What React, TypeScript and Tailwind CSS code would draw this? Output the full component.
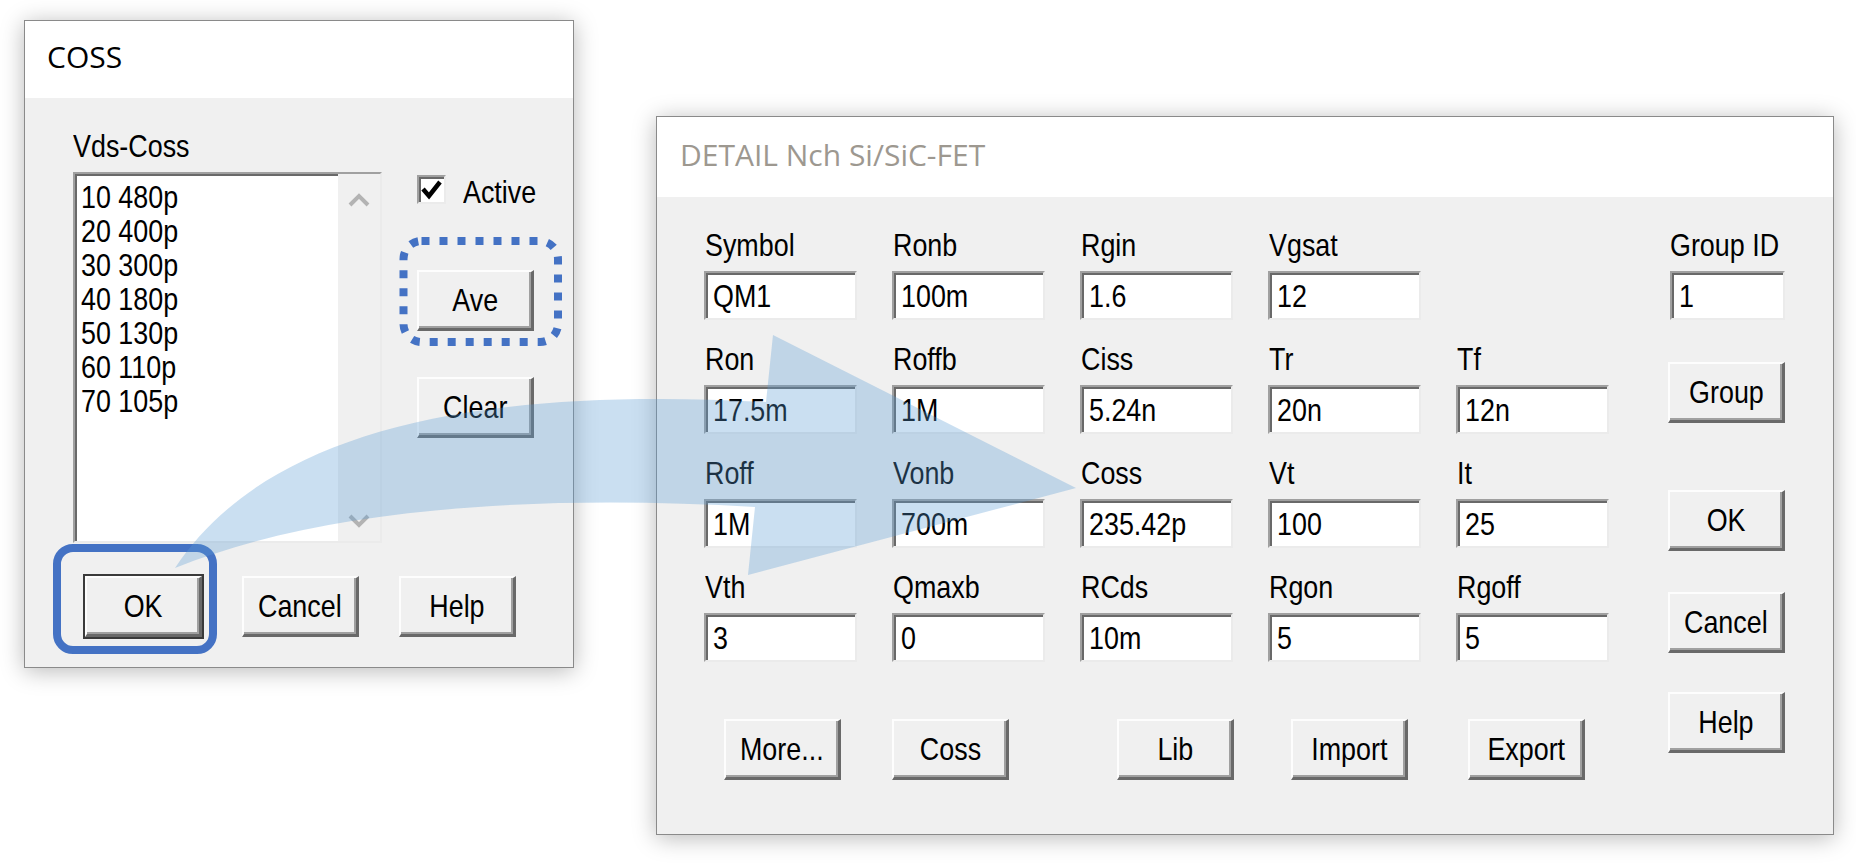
import React from 'react';

const ui = "font-['Liberation_Sans',sans-serif] text-[32px] leading-[34px] text-black";

// Dialog font is a narrow sans; squeeze Liberation Sans to Arial Narrow proportions
const T = ({ children, center = false }: { children: React.ReactNode; center?: boolean }) => (
  <span className={`inline-block whitespace-nowrap scale-x-[0.84] ${center ? 'origin-center' : 'origin-left'}`}>{children}</span>
);

const Btn = ({ label, def = false, className = '' }: { label: string; def?: boolean; className?: string }) => (
  <div
    className={`flex items-center justify-center w-[117px] h-[61px] shrink-0 bg-[#f0f0f0] border-t-2 border-l-2 border-t-[#fdfdfd] border-l-[#fdfdfd] border-r-[3px] border-b-[3px] border-r-[#696969] border-b-[#696969] shadow-[inset_-2px_-2px_0_#a0a0a0] ${def ? 'outline-2 outline-[#3a3a3a]' : ''} ${className}`}
  >
    <T center>{label}</T>
  </div>
);

const sunken = 'bg-white border-t-2 border-l-2 border-t-[#a0a0a0] border-l-[#a0a0a0] border-r-2 border-b-2 border-r-[#ebebeb] border-b-[#ebebeb] shadow-[inset_2px_2px_0_#696969]';

const Field = ({ value, className = 'w-[153px]' }: { value: string; className?: string }) => (
  <div className={`flex items-center h-[49px] pl-[7px] ${sunken} ${className}`}>
    <T>{value}</T>
  </div>
);

const Chevron = ({ down = false }: { down?: boolean }) => (
  <svg width="22" height="14" viewBox="0 0 22 14">
    <polyline
      points={down ? '2,2 11,11 20,2' : '2,12 11,3 20,12'}
      fill="none"
      stroke="#b3b3b3"
      strokeWidth="4"
    />
  </svg>
);

const CossDialog = () => {
  const items = ['10 480p', '20 400p', '30 300p', '40 180p', '50 130p', '60 110p', '70 105p'];
  return (
    <div className="mt-[20px] w-[550px] h-[648px] shrink-0 flex flex-col bg-white border border-[#8a8a8a] shadow-[0_3px_22px_rgba(0,0,0,0.28)]">
      <div className="h-[77px] pl-[22px] pt-[21px] font-['Open_Sans',sans-serif] text-[30px] leading-[30px] text-black">COSS</div>
      <div className={`flex-1 bg-[#f0f0f0] pl-[48px] pt-[31px] ${ui}`}>
        <div className="flex">
          <div className="flex flex-col">
            <div>
              <T>Vds-Coss</T>
            </div>
            <div className={`mt-[9px] flex w-[309px] h-[371px] ${sunken}`}>
              <div className="w-[263px] pl-[6px] pt-[6px]">
                {items.map((it) => (
                  <div key={it}>
                    <T>{it}</T>
                  </div>
                ))}
              </div>
              <div className="w-[42px] bg-[#f0f0f0] flex flex-col items-center justify-between pt-[19px] pb-[13px]">
                <Chevron />
                <Chevron down />
              </div>
            </div>
          </div>
          <div className="ml-[35px] pt-[46px] flex flex-col">
            <div className="flex items-start">
              <div className={`w-[29px] h-[29px] ${sunken}`}>
                <svg width="25" height="25" viewBox="0 0 25 25">
                  <polyline points="4,12 10,19 21,5" fill="none" stroke="#000" strokeWidth="4.5" />
                </svg>
              </div>
              <span className="ml-[17px]">
                <T>Active</T>
              </span>
            </div>
            <Btn label="Ave" className="mt-[61px]" />
            <Btn label="Clear" className="mt-[46px]" />
          </div>
        </div>
        <div className="flex gap-[40px] ml-[12px] mt-[33px]">
          <Btn label="OK" def />
          <Btn label="Cancel" />
          <Btn label="Help" />
        </div>
      </div>
    </div>
  );
};

const rows: ([string, string] | null)[][] = [
  [['Symbol', 'QM1'], ['Ronb', '100m'], ['Rgin', '1.6'], ['Vgsat', '12'], null],
  [['Ron', '17.5m'], ['Roffb', '1M'], ['Ciss', '5.24n'], ['Tr', '20n'], ['Tf', '12n']],
  [['Roff', '1M'], ['Vonb', '700m'], ['Coss', '235.42p'], ['Vt', '100'], ['It', '25']],
  [['Vth', '3'], ['Qmaxb', '0'], ['RCds', '10m'], ['Rgon', '5'], ['Rgoff', '5']],
];

const DetailDialog = () => (
  <div className="ml-[82px] mt-[116px] w-[1178px] h-[719px] shrink-0 flex flex-col bg-white border border-[#8a8a8a] shadow-[0_3px_22px_rgba(0,0,0,0.28)]">
    <div className="h-[80px] pl-[23px] pt-[23px] font-['Open_Sans',sans-serif] text-[30px] leading-[30px] text-[#9d9890]">
      DETAIL Nch Si/SiC-FET
    </div>
    <div className={`flex-1 bg-[#f0f0f0] flex pl-[47px] pt-[31px] ${ui}`}>
      <div className="flex flex-col">
        <div className="grid grid-cols-[repeat(5,153px)] gap-x-[35px] gap-y-[22px]">
          {rows.flat().map((cell, i) =>
            cell ? (
              <div key={i} className="flex flex-col">
                <div className="pl-[1px]">
                  <T>{cell[0]}</T>
                </div>
                <Field value={cell[1]} className="w-[153px] mt-[9px]" />
              </div>
            ) : (
              <div key={i} />
            )
          )}
        </div>
        <div className="flex mt-[57px] pl-[20px]">
          <Btn label="More..." />
          <Btn label="Coss" className="ml-[51px]" />
          <Btn label="Lib" className="ml-[108px]" />
          <Btn label="Import" className="ml-[57px]" />
          <Btn label="Export" className="ml-[60px]" />
        </div>
      </div>
      <div className="ml-[59px] flex flex-col">
        <div className="pl-[2px]">
          <T>Group ID</T>
        </div>
        <Field value="1" className="w-[115px] mt-[9px] ml-[2px]" />
        <Btn label="Group" className="mt-[42px]" />
        <Btn label="OK" className="mt-[67px]" />
        <Btn label="Cancel" className="mt-[41px]" />
        <Btn label="Help" className="mt-[39px]" />
      </div>
    </div>
  </div>
);

export default function App() {
  return (
    <div className="relative w-[1856px] h-[868px] overflow-hidden bg-white">
      <div className="flex items-start pl-[24px]">
        <CossDialog />
        <DetailDialog />
      </div>
      {/* callout overlays: highlight rings and the curved arrow */}
      <svg className="absolute inset-0 pointer-events-none" width="1856" height="868" viewBox="0 0 1856 868">
        <rect x="57" y="548" width="156" height="102" rx="16" fill="none" stroke="#4472c4" strokeWidth="8" />
        <rect
          x="403.5"
          y="241"
          width="154.5"
          height="101"
          rx="18"
          fill="none"
          stroke="#4472c4"
          strokeWidth="8"
          strokeDasharray="8 10"
        />
        <path
          d="M175 568 C260 440 450 385 766 402 L773 335 L1076 488 L748 575 L755 507 C550 495 330 505 175 568 Z"
          fill="rgb(91,155,213)"
          fillOpacity="0.32"
        />
      </svg>
    </div>
  );
}
